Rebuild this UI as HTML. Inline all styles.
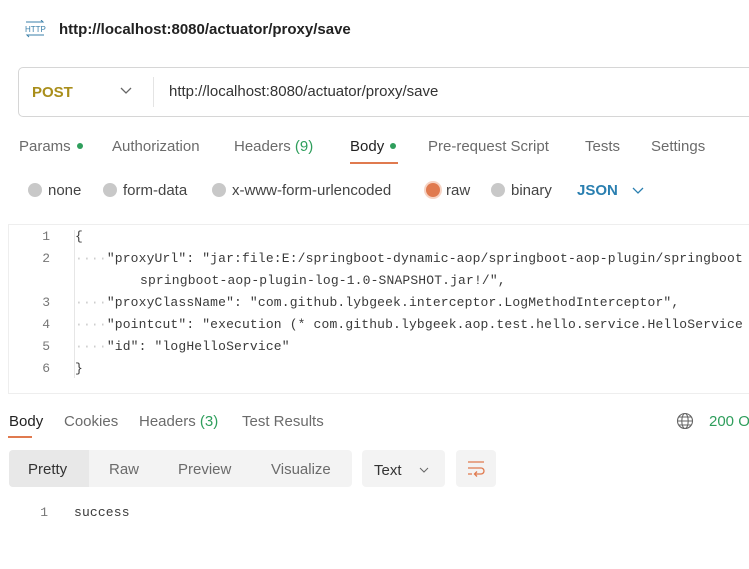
<!DOCTYPE html>
<html><head><meta charset="utf-8"><style>
*{margin:0;padding:0;box-sizing:border-box}
body{width:749px;height:569px;overflow:hidden;background:#fff;font-family:"Liberation Sans",sans-serif;color:#6b6b6b;position:relative}
.a{position:absolute;white-space:nowrap}
.dot{display:inline-block;width:6px;height:6px;border-radius:50%;background:#2f9e5c;vertical-align:middle;margin-left:6px;position:relative;top:-1px}
.rad{display:inline-block;width:14px;height:14px;border-radius:50%;background:#c8c8c8;vertical-align:middle;margin-right:6px;position:relative;top:-1px}
.code{font-family:"Liberation Mono",monospace;font-size:13px;letter-spacing:0.15px;color:#3a3a3a}
.ln{color:#777;font-family:"Liberation Mono",monospace;font-size:13px;width:20px;text-align:right}
.dd{color:#ccc}
</style></head><body>
<svg class="a" style="left:24px;top:20px" width="22" height="18" viewBox="0 0 22 18"><text x="1" y="12" font-size="8" font-family="Liberation Sans" fill="#3a7fa8">HTTP</text><path d="M2 2h17l-2-2M20 15H3l2 2" stroke="#3a7fa8" fill="none"/></svg>
<div class="a" style="left:59px;top:21px;font-size:15px;color:#222;font-weight:bold">http://localhost:8080/actuator/proxy/save</div>
<div class="a" style="left:18px;top:67px;width:740px;height:50px;border:1px solid #d6d6d6;border-radius:5px"></div>
<div class="a" style="left:32px;top:84px;font-size:15px;color:#a98e1a;font-weight:bold">POST</div>
<svg class="a" style="left:120px;top:87px" width="12" height="8"><path d="M1 1l5 5 5-5" stroke="#666" fill="none" stroke-width="1.3"/></svg>
<div class="a" style="left:153px;top:77px;width:1px;height:30px;background:#e4e4e4"></div>
<div class="a" style="left:169px;top:83px;font-size:15px;color:#333">http://localhost:8080/actuator/proxy/save</div>
<div class="a" style="left:19px;top:138px;font-size:15px">Params<span class="dot"></span></div>
<div class="a" style="left:112px;top:138px;font-size:15px">Authorization</div>
<div class="a" style="left:234px;top:138px;font-size:15px">Headers <span style="color:#2f9e5c">(9)</span></div>
<div class="a" style="left:350px;top:138px;font-size:15px;color:#222">Body<span class="dot"></span></div>
<div class="a" style="left:350px;top:162px;width:48px;height:2px;background:#e07a4f"></div>
<div class="a" style="left:428px;top:138px;font-size:15px">Pre-request Script</div>
<div class="a" style="left:585px;top:138px;font-size:15px">Tests</div>
<div class="a" style="left:651px;top:138px;font-size:15px">Settings</div>
<div class="a" style="left:28px;top:182px;font-size:15px;color:#444"><span class="rad"></span>none</div>
<div class="a" style="left:103px;top:182px;font-size:15px;color:#444"><span class="rad"></span>form-data</div>
<div class="a" style="left:212px;top:182px;font-size:15px;color:#444"><span class="rad"></span>x-www-form-urlencoded</div>
<div class="a" style="left:426px;top:182px;font-size:15px;color:#444"><span class="rad" style="background:#e07a4f;box-shadow:0 0 0 2px #f6d3c4"></span>raw</div>
<div class="a" style="left:491px;top:182px;font-size:15px;color:#444"><span class="rad"></span>binary</div>
<div class="a" style="left:577px;top:182px;font-size:15px;color:#2a7fb0;font-weight:bold">JSON</div>
<svg class="a" style="left:632px;top:187px" width="12" height="8"><path d="M1 1l5 5 5-5" stroke="#2a7fb0" fill="none" stroke-width="1.3"/></svg>
<div class="a" style="left:8px;top:224px;width:760px;height:170px;border:1px solid #eee;border-right:none"></div>
<div class="a ln" style="left:30px;top:229px">1</div>
<div class="a ln" style="left:30px;top:251px">2</div>
<div class="a ln" style="left:30px;top:295px">3</div>
<div class="a ln" style="left:30px;top:317px">4</div>
<div class="a ln" style="left:30px;top:339px">5</div>
<div class="a ln" style="left:30px;top:361px">6</div>
<div class="a code" style="left:75px;top:229px">{</div>
<div class="a code" style="left:75px;top:251px"><span class="dd">····</span>"proxyUrl": "jar:file:E:/springboot-dynamic-aop/springboot-aop-plugin/springboot</div>
<div class="a code" style="left:140px;top:273px">springboot-aop-plugin-log-1.0-SNAPSHOT.jar!/",</div>
<div class="a code" style="left:75px;top:295px"><span class="dd">····</span>"proxyClassName": "com.github.lybgeek.interceptor.LogMethodInterceptor",</div>
<div class="a code" style="left:75px;top:317px"><span class="dd">····</span>"pointcut": "execution (* com.github.lybgeek.aop.test.hello.service.HelloService</div>
<div class="a code" style="left:75px;top:339px"><span class="dd">····</span>"id": "logHelloService"</div>
<div class="a code" style="left:75px;top:361px">}</div>
<div class="a" style="left:74px;top:230px;width:1px;height:148px;background:#e6e6e6"></div>
<div class="a" style="left:9px;top:413px;font-size:15px;color:#222">Body</div>
<div class="a" style="left:8px;top:436px;width:24px;height:2px;background:#e07a4f"></div>
<div class="a" style="left:64px;top:413px;font-size:15px">Cookies</div>
<div class="a" style="left:139px;top:413px;font-size:15px">Headers <span style="color:#2f9e5c">(3)</span></div>
<div class="a" style="left:242px;top:413px;font-size:15px">Test Results</div>
<svg class="a" style="left:676px;top:412px" width="18" height="18" viewBox="0 0 18 18"><g stroke="#666" fill="none" stroke-width="1.1"><circle cx="9" cy="9" r="7.5"/><ellipse cx="9" cy="9" rx="3.2" ry="7.5"/><path d="M1.5 9h15M3 5h12M3 13h12"/></g></svg>
<div class="a" style="left:709px;top:413px;font-size:15px;color:#2f9e5c">200 O</div>
<div class="a" style="left:9px;top:450px;width:343px;height:37px;background:#f3f3f3;border-radius:4px"></div>
<div class="a" style="left:9px;top:450px;width:80px;height:37px;background:#e8e8e8;border-radius:4px 0 0 4px"></div>
<div class="a" style="left:28px;top:461px;font-size:15px;color:#333">Pretty</div>
<div class="a" style="left:109px;top:461px;font-size:15px">Raw</div>
<div class="a" style="left:178px;top:461px;font-size:15px">Preview</div>
<div class="a" style="left:271px;top:461px;font-size:15px">Visualize</div>
<div class="a" style="left:362px;top:450px;width:83px;height:37px;background:#f3f3f3;border-radius:4px"></div>
<div class="a" style="left:374px;top:462px;font-size:15px;color:#333">Text</div>
<svg class="a" style="left:419px;top:467px" width="10" height="7"><path d="M1 1l4 4 4-4" stroke="#666" fill="none"/></svg>
<div class="a" style="left:456px;top:450px;width:40px;height:37px;background:#f3f3f3;border-radius:4px"></div>
<svg class="a" style="left:466px;top:460px" width="20" height="18" viewBox="0 0 20 18"><g stroke="#e07a4f" fill="none" stroke-width="1.3"><path d="M2 2h16M2 8h13a3 3 0 0 1 0 6h-6M11 11.5l-2.5 2.5 2.5 2.5M2 14h4"/></g></svg>
<div class="a ln" style="left:28px;top:505px">1</div>
<div class="a code" style="left:74px;top:505px">success</div>
</body></html>
